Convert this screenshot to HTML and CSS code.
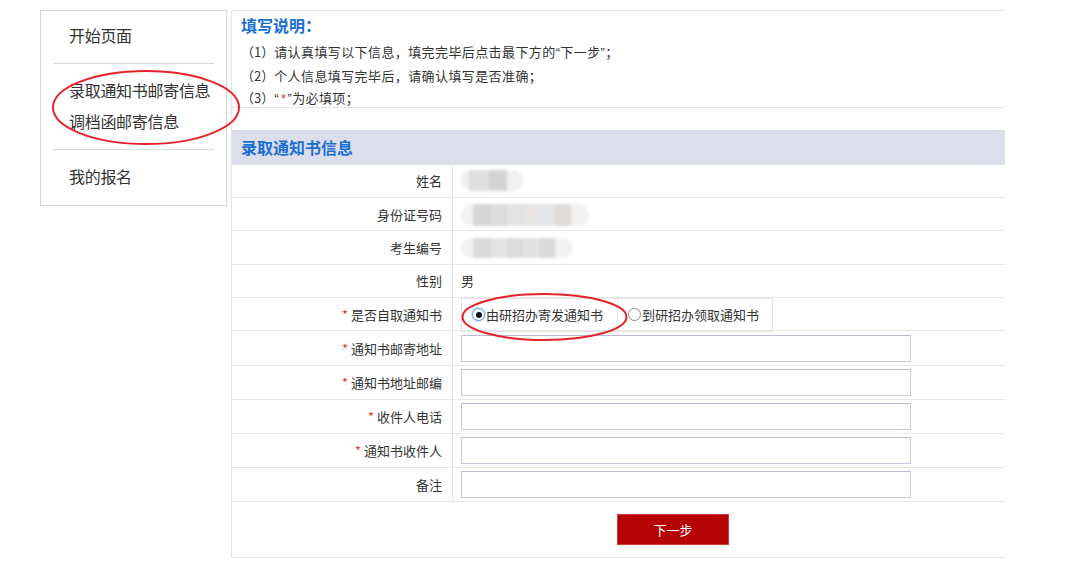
FILE: index.html
```html
<!DOCTYPE html>
<html lang="zh-CN">
<head>
    <meta charset="UTF-8">
    <meta name="viewport" content="width=device-width, initial-scale=1.0">
    <title>录取通知书信息</title>
    <link rel="stylesheet" href="styles.css">
</head>
<body>
    <div class="page">
        <div class="sidebar">
            <div class="nav-group nav-first">
                <a class="nav-link">开始页面</a>
            </div>
            <div class="nav-group nav-mail">
                <a class="nav-link">录取通知书邮寄信息</a>
                <a class="nav-link">调档函邮寄信息</a>
            </div>
            <div class="nav-group nav-last">
                <a class="nav-link">我的报名</a>
            </div>
        </div>

        <div class="main">
            <div class="notice">
                <div class="notice-title">填写说明：</div>
                <p><span class="num">（1）</span>请认真填写以下信息，填完完毕后点击最下方的<span class="q">“</span>下一步<span class="q">”</span>；</p>
                <p><span class="num">（2）</span>个人信息填写完毕后，请确认填写是否准确；</p>
                <p><span class="num">（3）</span><span class="q">“<span class="req star">*</span>”</span>为必填项；</p>
            </div>

            <div class="section-title">录取通知书信息</div>

            <div class="form-row">
                <div class="form-label">姓名</div>
                <div class="form-value"><span class="mosaic mosaic-name"></span></div>
            </div>
            <div class="form-row">
                <div class="form-label">身份证号码</div>
                <div class="form-value"><span class="mosaic mosaic-id"></span></div>
            </div>
            <div class="form-row">
                <div class="form-label">考生编号</div>
                <div class="form-value"><span class="mosaic mosaic-no"></span></div>
            </div>
            <div class="form-row">
                <div class="form-label">性别</div>
                <div class="form-value">男</div>
            </div>
            <div class="form-row">
                <div class="form-label"><span class="req">*</span> 是否自取通知书</div>
                <div class="form-value">
                    <div class="radio-group">
                        <label class="radio-cell"><span class="radio checked"></span>由研招办寄发通知书</label>
                        <label class="radio-cell"><span class="radio"></span>到研招办领取通知书</label>
                    </div>
                </div>
            </div>
            <div class="form-row input-row">
                <div class="form-label"><span class="req">*</span> 通知书邮寄地址</div>
                <div class="form-value"><input class="text-input" type="text"></div>
            </div>
            <div class="form-row input-row">
                <div class="form-label"><span class="req">*</span> 通知书地址邮编</div>
                <div class="form-value"><input class="text-input" type="text"></div>
            </div>
            <div class="form-row input-row">
                <div class="form-label"><span class="req">*</span> 收件人电话</div>
                <div class="form-value"><input class="text-input" type="text"></div>
            </div>
            <div class="form-row input-row">
                <div class="form-label"><span class="req">*</span> 通知书收件人</div>
                <div class="form-value"><input class="text-input" type="text"></div>
            </div>
            <div class="form-row input-row">
                <div class="form-label">备注</div>
                <div class="form-value"><input class="text-input" type="text"></div>
            </div>
            <div class="form-actions">
                <button class="btn-next" type="button">下一步</button>
            </div>
        </div>
    </div>

    <!-- red hand-drawn marks on top of the screenshot -->
    <svg class="marks" width="1080" height="566" viewBox="0 0 1080 566">
        <ellipse cx="146" cy="107.5" rx="93" ry="36.5" />
        <ellipse cx="544.5" cy="317" rx="82" ry="23" />
    </svg>
</body>
</html>
```

FILE: styles.css
```css
body {
    margin: 0;
    background: #fff;
    color: #333;
    font-family: "Noto Sans CJK SC", "Liberation Sans", sans-serif;
    font-size: 13px;
}

.page {
    display: flex;
    align-items: flex-start;
    gap: 4px;
    padding: 10px 0 0 40px;
    position: relative;
}

/* sidebar */
.sidebar {
    width: 187px;
    box-sizing: border-box;
    border: 1px solid #d6d6d6;
    padding: 0 12px;
    height: 196px;
}

.nav-group {
    display: flex;
    flex-direction: column;
    padding-left: 16px;
}

.nav-group + .nav-group {
    border-top: 1px solid #dadada;
}

.nav-first {
    padding-top: 12px;
    padding-bottom: 16px;
}

.nav-mail {
    padding-top: 11px;
    padding-bottom: 12px;
}

.nav-last {
    padding-top: 14px;
}

.nav-link {
    font-size: 16px;
    line-height: 24px;
    color: #333;
    letter-spacing: -0.3px;
}

.nav-mail .nav-link {
    line-height: 31px;
}

/* main column */
.main {
    width: 773px;
    border-left: 1px solid #e4e4e4;
}

.notice {
    border-top: 1px solid #e4e4e4;
    border-bottom: 1px solid #e4e4e4;
    padding: 3px 10px 0 9px;
    box-sizing: border-box;
    height: 98px;
}

.notice-title {
    font-size: 16px;
    font-weight: bold;
    line-height: 22px;
    color: #1b6fd4;
    margin-bottom: 5px;
}

.notice p {
    margin: 0;
    line-height: 22.5px;
    font-size: 13px;
    letter-spacing: 0.4px;
}

.num {
    white-space: nowrap;
    letter-spacing: 0;
}

.q {
    font-family: "Liberation Sans", sans-serif;
}

.req {
    color: #e8373a;
}

.star {
    display: inline-block;
    margin: 0 1px 0 2px;
}

.section-title {
    margin-top: 22px;
    height: 34.5px;
    line-height: 34.5px;
    background: #dcdfeb;
    color: #1b6fd4;
    font-size: 16px;
    font-weight: bold;
    padding-left: 9px;
}

.form-row {
    display: flex;
    height: 33.4px;
    box-sizing: border-box;
    border-bottom: 1px solid #e6e6e6;
}

.input-row {
    height: 34.2px;
}

.form-label {
    width: 221px;
    box-sizing: border-box;
    border-right: 1px solid #e6e6e6;
    padding-right: 10px;
    display: flex;
    align-items: center;
    justify-content: flex-end;
    white-space: pre;
}

.form-value {
    flex: 1;
    display: flex;
    align-items: center;
    padding-left: 8px;
}

.mosaic {
    display: block;
    border-radius: 10px;
    filter: blur(1.5px);
}

.mosaic-name {
    width: 62px;
    height: 21px;
    margin-top: -1px;
    background: linear-gradient(90deg, #f1f1f1 0 8px, #dedede 8px 28px, #d4d4d4 28px 46px, #f0f0f0 46px);
}

.mosaic-id {
    width: 128px;
    height: 22px;
    margin-top: 2px;
    background: linear-gradient(90deg, #f2f2f2 0 12px, #d6d6d6 12px 30px, #dcdcdc 30px 46px, #e3e3e3 46px 62px, #e7e4e1 62px 78px, #e3e5e8 78px 94px, #dfdbd8 94px 110px, #f1f1f1 110px);
}

.mosaic-no {
    width: 112px;
    height: 20px;
    margin-top: 2px;
    background: linear-gradient(90deg, #f3f3f3 0 12px, #dadada 12px 30px, #e4e4e4 30px 46px, #dcdcdc 46px 62px, #e2e2e2 62px 78px, #dadada 78px 94px, #f1f1f1 94px);
}

/* radio choice */
.radio-group {
    display: flex;
    height: 34px;
    box-sizing: border-box;
    border: 1px solid #e4e4e4;
    margin-top: 1px;
}

.radio-cell {
    display: flex;
    align-items: center;
    padding-left: 10px;
    width: 155px;
    box-sizing: border-box;
    white-space: nowrap;
    font-size: 13px;
}

.radio-cell + .radio-cell {
    border-left: 1px solid #e4e4e4;
}

.radio {
    width: 11px;
    height: 11px;
    border-radius: 50%;
    border: 1px solid #8c8c8c;
    background: #fff;
    margin-right: 1px;
    flex: none;
    position: relative;
}

.radio.checked {
    border-color: #5aa1df;
    box-shadow: 0 0 0 1px #cfe3f5;
}

.radio.checked::after {
    content: "";
    position: absolute;
    left: 2.5px;
    top: 2.5px;
    width: 6px;
    height: 6px;
    border-radius: 50%;
    background: #111;
}

.text-input {
    width: 450px;
    height: 27px;
    box-sizing: border-box;
    border: 1px solid #c6cbe0;
    border-top-color: #b6bcd6;
    background: #fff;
    margin: 0;
    padding: 0 4px;
}

.form-actions {
    height: 55.5px;
    box-sizing: border-box;
    border-bottom: 1px solid #e6e6e6;
    padding: 12px 0 0 385px;
}

.btn-next {
    width: 112px;
    height: 31px;
    background: #b50204;
    border: 1px solid #d23b3b;
    color: #fff;
    font-family: "Noto Sans CJK SC", "Liberation Sans", sans-serif;
    font-size: 13px;
    padding: 0;
}

.marks {
    position: absolute;
    left: 0;
    top: 0;
    pointer-events: none;
}

.marks ellipse {
    fill: none;
    stroke: #e5232a;
    stroke-width: 2;
}
```
